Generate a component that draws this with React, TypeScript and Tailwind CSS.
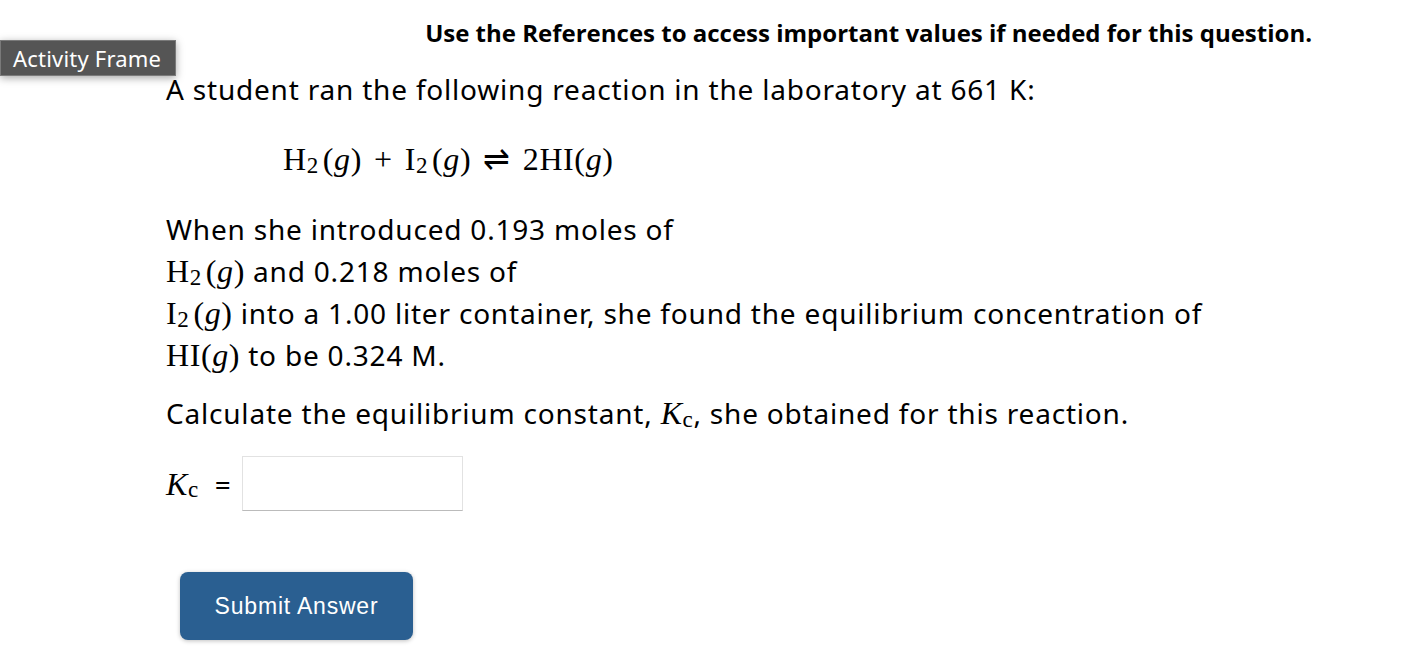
import React from 'react';

const math = "font-['Liberation_Serif',serif] tracking-[0.6px]";

function Sub({ children }: { children: React.ReactNode }) {
  return <sub className="relative top-[0.12em] align-baseline text-[0.72em]">{children}</sub>;
}

function G() {
  return (
    <span className="ml-[4px]">
      (<i>g</i>)
    </span>
  );
}

export default function App() {
  return (
    <div className="relative h-[664px] w-[1420px] overflow-hidden bg-white font-['Noto_Sans',sans-serif] text-black">
      <div className="flex justify-end pr-[108px] pt-[16px]">
        <p className="font-['Open_Sans',sans-serif] text-[24px] font-bold leading-[34px]">
          Use the References to access important values if needed for this question.
        </p>
      </div>

      <div className="absolute left-0 top-[40px] flex h-[36px] w-[176px] items-center border border-[#7a7a7a] bg-[#555] px-[12px] text-[22px] tracking-[0.2px] text-white shadow-[0_2px_8px_rgba(0,0,0,0.35)]">
        Activity Frame
      </div>

      <div className="pl-[166px] pt-[18px] text-[28px] leading-[42px] tracking-[0.8px]">
        <p>A student ran the following reaction in the laboratory at 661 K:</p>

        <p className={`${math} mt-[28px] pl-[117px] text-[32px]`}>
          H<Sub>2</Sub>
          <G />
          <span className="mx-[12px]">+</span>I<Sub>2</Sub>
          <G />
          <span className="mx-[12px]">⇌</span>2HI<span>(<i>g</i>)</span>
        </p>

        <div className="mt-[28px]">
          <p>When she introduced 0.193 moles of</p>
          <p>
            <span className={`${math} text-[32px]`}>
              H<Sub>2</Sub>
              <G />
            </span>{' '}
            and 0.218 moles of
          </p>
          <p>
            <span className={`${math} text-[32px]`}>
              I<Sub>2</Sub>
              <G />
            </span>{' '}
            into a 1.00 liter container, she found the equilibrium concentration of
          </p>
          <p>
            <span className={`${math} text-[32px]`}>
              HI<span>(<i>g</i>)</span>
            </span>{' '}
            to be 0.324 M.
          </p>
        </div>

        <p className="mt-[16px]">
          Calculate the equilibrium constant,{' '}
          <span className={`${math} text-[32px]`}>
            <i>K</i>
            <Sub>c</Sub>
          </span>
          , she obtained for this reaction.
        </p>

        <div className="mt-[22px] flex items-center">
          <span className={`${math} text-[32px]`}>
            <i>K</i>
            <Sub>c</Sub>
          </span>
          <span className="ml-[16px]">=</span>
          <div className="ml-[10px] h-[55px] w-[221px] border border-[#e2e2e2] border-b-[#bbb] bg-white" />
        </div>

        <button className="ml-[14px] mt-[61px] h-[68px] w-[233px] rounded-[8px] bg-[#2a5f91] font-['Liberation_Sans',sans-serif] text-[23px] text-white shadow-[0_1px_4px_rgba(0,0,0,0.25)]">
          Submit Answer
        </button>
      </div>
    </div>
  );
}
